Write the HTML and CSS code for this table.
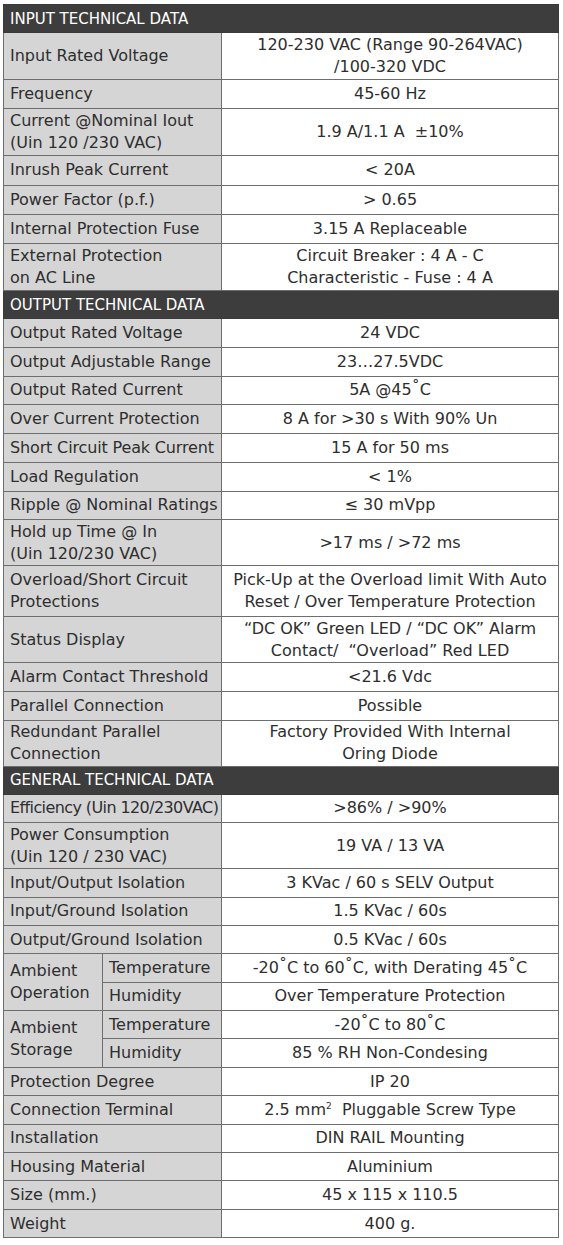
FILE: index.html
```html
<!DOCTYPE html>
<html>
<head>
<meta charset="utf-8">
<link rel="stylesheet" href="styles.css">
</head>
<body>
<table class="spec">
  <colgroup><col class="c1"><col class="c2"><col class="c3"></colgroup>
  <tbody class="sec-in">
    <tr class="head"><th colspan="3">INPUT TECHNICAL DATA</th></tr>
    <tr class="dbl"><td class="lbl" colspan="2">Input Rated Voltage</td><td class="val">120-230 VAC (Range 90-264VAC)<br>/100-320 VDC</td></tr>
    <tr><td class="lbl" colspan="2">Frequency</td><td class="val">45-60 Hz</td></tr>
    <tr class="dbl"><td class="lbl" colspan="2">Current @Nominal Iout<br>(Uin 120 /230 VAC)</td><td class="val">1.9 A/1.1 A&nbsp; ±10%</td></tr>
    <tr><td class="lbl" colspan="2">Inrush Peak Current</td><td class="val">&lt; 20A</td></tr>
    <tr><td class="lbl" colspan="2">Power Factor (p.f.)</td><td class="val">&gt; 0.65</td></tr>
    <tr><td class="lbl" colspan="2">Internal Protection Fuse</td><td class="val">3.15 A Replaceable</td></tr>
    <tr class="dbl"><td class="lbl" colspan="2">External Protection<br>on AC Line</td><td class="val">Circuit Breaker : 4 A - C<br>Characteristic - Fuse : 4 A</td></tr>
  </tbody>
  <tbody class="sec-out">
    <tr class="head"><th colspan="3">OUTPUT TECHNICAL DATA</th></tr>
    <tr><td class="lbl" colspan="2">Output Rated Voltage</td><td class="val">24 VDC</td></tr>
    <tr><td class="lbl" colspan="2">Output Adjustable Range</td><td class="val">23…27.5VDC</td></tr>
    <tr><td class="lbl" colspan="2">Output Rated Current</td><td class="val">5A @45<span class="deg">˚</span>C</td></tr>
    <tr><td class="lbl" colspan="2">Over Current Protection</td><td class="val">8 A for &gt;30 s With 90% Un</td></tr>
    <tr><td class="lbl tight" colspan="2">Short Circuit Peak Current</td><td class="val">15 A for 50 ms</td></tr>
    <tr><td class="lbl" colspan="2">Load Regulation</td><td class="val">&lt; 1%</td></tr>
    <tr><td class="lbl" colspan="2">Ripple @ Nominal Ratings</td><td class="val">≤ 30 mVpp</td></tr>
    <tr class="dbl"><td class="lbl" colspan="2">Hold up Time @ In<br>(Uin 120/230 VAC)</td><td class="val">&gt;17 ms / &gt;72 ms</td></tr>
    <tr class="dbl tall"><td class="lbl" colspan="2">Overload/Short Circuit<br>Protections</td><td class="val">Pick-Up at the Overload limit With Auto<br>Reset / Over Temperature Protection</td></tr>
    <tr class="dbl"><td class="lbl" colspan="2">Status Display</td><td class="val">“DC OK” Green LED / “DC OK” Alarm<br>Contact/&nbsp; “Overload” Red LED</td></tr>
    <tr><td class="lbl" colspan="2">Alarm Contact Threshold</td><td class="val">&lt;21.6 Vdc</td></tr>
    <tr><td class="lbl" colspan="2">Parallel Connection</td><td class="val">Possible</td></tr>
    <tr class="dbl"><td class="lbl" colspan="2">Redundant Parallel<br>Connection</td><td class="val">Factory Provided With Internal<br>Oring Diode</td></tr>
  </tbody>
  <tbody class="sec-gen">
    <tr class="head"><th colspan="3">GENERAL TECHNICAL DATA</th></tr>
    <tr><td class="lbl tighter" colspan="2">Efficiency (Uin 120/230VAC)</td><td class="val">&gt;86% / &gt;90%</td></tr>
    <tr class="dbl"><td class="lbl" colspan="2">Power Consumption<br>(Uin 120 / 230 VAC)</td><td class="val">19 VA / 13 VA</td></tr>
    <tr><td class="lbl" colspan="2">Input/Output Isolation</td><td class="val">3 KVac / 60 s SELV Output</td></tr>
    <tr><td class="lbl" colspan="2">Input/Ground Isolation</td><td class="val">1.5 KVac / 60s</td></tr>
    <tr><td class="lbl" colspan="2">Output/Ground Isolation</td><td class="val">0.5 KVac / 60s</td></tr>
    <tr><td class="lbl grp" rowspan="2">Ambient<br>Operation</td><td class="lbl">Temperature</td><td class="val">-20<span class="deg">˚</span>C to 60<span class="deg">˚</span>C, with Derating 45<span class="deg">˚</span>C</td></tr>
    <tr><td class="lbl">Humidity</td><td class="val">Over Temperature Protection</td></tr>
    <tr><td class="lbl grp" rowspan="2">Ambient<br>Storage</td><td class="lbl">Temperature</td><td class="val">-20<span class="deg">˚</span>C to 80<span class="deg">˚</span>C</td></tr>
    <tr><td class="lbl">Humidity</td><td class="val">85 % RH Non-Condesing</td></tr>
    <tr><td class="lbl" colspan="2">Protection Degree</td><td class="val">IP 20</td></tr>
    <tr><td class="lbl" colspan="2">Connection Terminal</td><td class="val">2.5 mm<sup>2</sup>&nbsp; Pluggable Screw Type</td></tr>
    <tr><td class="lbl" colspan="2">Installation</td><td class="val">DIN RAIL Mounting</td></tr>
    <tr><td class="lbl" colspan="2">Housing Material</td><td class="val">Aluminium</td></tr>
    <tr><td class="lbl" colspan="2">Size (mm.)</td><td class="val">45 x 115 x 110.5</td></tr>
    <tr><td class="lbl" colspan="2">Weight</td><td class="val">400 g.</td></tr>
  </tbody>
</table>
</body>
</html>
```
FILE: styles.css
```css
html, body {
  margin: 0;
  padding: 0;
  background: #ffffff;
}

body {
  padding: 4px 0 0 3px;
  font-family: "DejaVu Sans", "Liberation Sans", sans-serif;
  font-size: 16px;
  color: #2e2e2e;
}

.spec {
  width: 556px;
  border-collapse: collapse;
  table-layout: fixed;
  border: 1px solid #3a3a3a;
}

.c1 { width: 99px; }
.c2 { width: 119px; }
.c3 { width: auto; }

.spec th,
.spec td {
  border: 1px solid #6e6e6e;
  height: 28.75px;
  padding: 0 6px;
  line-height: 22px;
  vertical-align: middle;
  box-sizing: border-box;
  white-space: nowrap;
}

.spec tr.dbl td {
  height: 46px;
}

.spec tr.tall td {
  height: 51px;
}

.spec .sec-in td {
  height: 29.25px;
}

.spec .sec-in tr.dbl td {
  height: 47px;
}

.spec .sec-gen td {
  height: 28.4px;
}

.spec .sec-gen tr.dbl td {
  height: 46px;
}

.spec .head th {
  height: 28px;
  background: #3d3d3d;
  color: #ffffff;
  font-size: 15px;
  font-weight: normal;
  text-align: left;
  border-color: #3a3a3a;
}

.lbl {
  background: #d5d5d5;
  text-align: left;
}

.tight {
  letter-spacing: -0.15px;
}

.tighter {
  letter-spacing: -0.6px;
}

.val {
  background: #ffffff;
  text-align: center;
}

.deg {
  position: relative;
  top: -2px;
}

sup {
  font-size: 9px;
  line-height: 0;
  vertical-align: 6px;
}
```
